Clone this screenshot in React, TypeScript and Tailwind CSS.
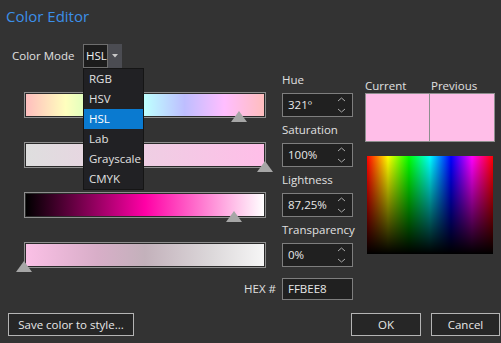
import React from "react";

const Tri = ({ left }: { left: number }) => (
  <svg
    className="absolute"
    style={{ left: left - 8, top: 19 }}
    width="16"
    height="11"
    viewBox="0 0 16 11"
  >
    <polygon points="8,0 16,11 0,11" fill="#a6a6a6" />
  </svg>
);

const Bar = ({ bg, pos }: { bg: string; pos: number }) => (
  <div className="relative h-[26px] w-[242px]">
    <div className="h-full w-full border border-[#8e8e8e] bg-[#2a2a2a] p-px">
      <div className="h-full w-full" style={{ background: bg }} />
    </div>
    <Tri left={pos} />
  </div>
);

const Spin = ({ value }: { value: string }) => (
  <div className="flex h-[24px] w-[71px] items-center justify-between border border-[#7e7e7e] bg-[#202020] pl-[5px] pr-[4px]">
    <span className="text-[#e8e8e8]">{value}</span>
    <svg width="9" height="18" viewBox="0 0 9 18" className="mr-[2px]">
      <polyline points="1,5 4.5,2 8,5" fill="none" stroke="#a8a8a8" strokeWidth="1" />
      <polyline points="1,13 4.5,16 8,13" fill="none" stroke="#a8a8a8" strokeWidth="1" />
    </svg>
  </div>
);

const Field = ({ label, value }: { label: string; value: string }) => (
  <div className="flex h-[50px] flex-col">
    <div className="h-[16px] leading-[16px]">{label}</div>
    <div className="mt-[5px]">
      <Spin value={value} />
    </div>
  </div>
);

export default function App() {
  const L = 87.25;
  const hueBar = `linear-gradient(to right, hsl(0,100%,${L}%), hsl(60,100%,${L}%), hsl(120,100%,${L}%), hsl(180,100%,${L}%), hsl(240,100%,${L}%), hsl(300,100%,${L}%), hsl(360,100%,${L}%))`;
  const satBar = `linear-gradient(to right, hsl(321,0%,${L}%), hsl(321,100%,${L}%))`;
  const lightBar = `linear-gradient(to right, #000000, hsl(321,100%,50%) 50%, #ffffff)`;
  const transBar = `linear-gradient(to right, #fbc0e6, #d8aec8 30%, #c3b1bb 50%, #dcd8da 78%, #f6f6f6)`;
  const spectrum =
    "linear-gradient(to bottom, rgba(0,0,0,0), #000000), linear-gradient(to right, #ff0000, #ffff00, #00ff00, #00ffff, #0000ff, #ff00ff, #ff0000)";

  const items = ["RGB", "HSV", "HSL", "Lab", "Grayscale", "CMYK"];

  return (
    <div
      className="relative h-[343px] w-[501px] overflow-hidden bg-[#333333] text-[11.5px] text-[#e0e0e0]"
      style={{ fontFamily: '"Open Sans", "Noto Sans", sans-serif' }}
    >
      <div className="flex h-[32px] items-center pl-[6px] text-[15px] text-[#3c8fe8]">
        Color Editor
      </div>

      <div className="flex">
        {/* left column */}
        <div className="w-[282px]">
          <div className="relative ml-[12px] mt-[12px] flex h-[24px] items-center">
            <span className="w-[71px]">Color Mode</span>
            <div className="flex h-[24px]">
              <div className="flex w-[25px] items-center border border-[#6e6e6e] bg-[#1c1c1c] pl-[2px] text-[#f0f0f0]">
                HSL
              </div>
              <div className="flex w-[14px] items-center justify-center bg-[#4b4c52]">
                <svg width="6" height="4" viewBox="0 0 6 4">
                  <polygon points="0,0 6,0 3,3.5" fill="#c8c8c8" />
                </svg>
              </div>
            </div>
            <div className="absolute left-[71px] top-[24px] z-10 w-[61px] border border-[#151515] bg-[#212124]">
              {items.map((it) => (
                <div
                  key={it}
                  className={
                    it === "HSL"
                      ? "h-[20px] bg-[#0a7ad0] pl-[5px] leading-[20px] text-white"
                      : "h-[20px] pl-[5px] leading-[20px] text-[#e0e0e0]"
                  }
                >
                  {it}
                </div>
              ))}
            </div>
          </div>

          <div className="ml-[24px] mt-[24px] flex flex-col gap-[24px]">
            <Bar bg={hueBar} pos={215} />
            <Bar bg={satBar} pos={241} />
            <Bar bg={lightBar} pos={210} />
            <Bar bg={transBar} pos={0} />
          </div>
        </div>

        {/* middle column */}
        <div className="mt-[40px] w-[71px]">
          <Field label="Hue" value="321º" />
          <Field label="Saturation" value="100%" />
          <Field label="Lightness" value="87,25%" />
          <Field label="Transparency" value="0%" />
          <div className="relative mt-[6px] flex h-[22px] w-[71px] items-center border border-[#7e7e7e] bg-[#202020] pl-[5px] text-[#e8e8e8]">
            FFBEE8
            <span className="absolute right-[76px] whitespace-nowrap text-[#e0e0e0]">HEX #</span>
          </div>
        </div>

        {/* right column */}
        <div className="ml-[12px] mt-[46px] w-[130px]">
          <div className="flex h-[15px] leading-[15px]">
            <span className="w-[66px]">Current</span>
            <span>Previous</span>
          </div>
          <div className="flex h-[49px] border border-[#8e8e8e]">
            <div className="h-full w-[64px] border-r border-[#8e8e8e] bg-[#ffbee8]" />
            <div className="h-full flex-1 bg-[#ffbee8]" />
          </div>
          <div
            className="ml-[2px] mt-[14px] h-[98px] w-[126px]"
            style={{ background: spectrum }}
          />
        </div>
      </div>

      {/* buttons */}
      <div className="absolute bottom-[7px] left-0 right-0 flex h-[23px]">
        <button className="ml-[8px] h-[23px] w-[126px] border border-[#b4b4b4] bg-[#262626] text-[11.5px] text-[#e8e8e8]">
          Save color to style...
        </button>
        <button className="ml-[217px] h-[23px] w-[70px] border border-[#b4b4b4] bg-[#262626] text-[11.5px] text-[#e8e8e8]">
          OK
        </button>
        <button className="ml-[10px] h-[23px] w-[69px] border border-[#b4b4b4] bg-[#262626] text-[11.5px] text-[#e8e8e8]">
          Cancel
        </button>
      </div>
    </div>
  );
}
